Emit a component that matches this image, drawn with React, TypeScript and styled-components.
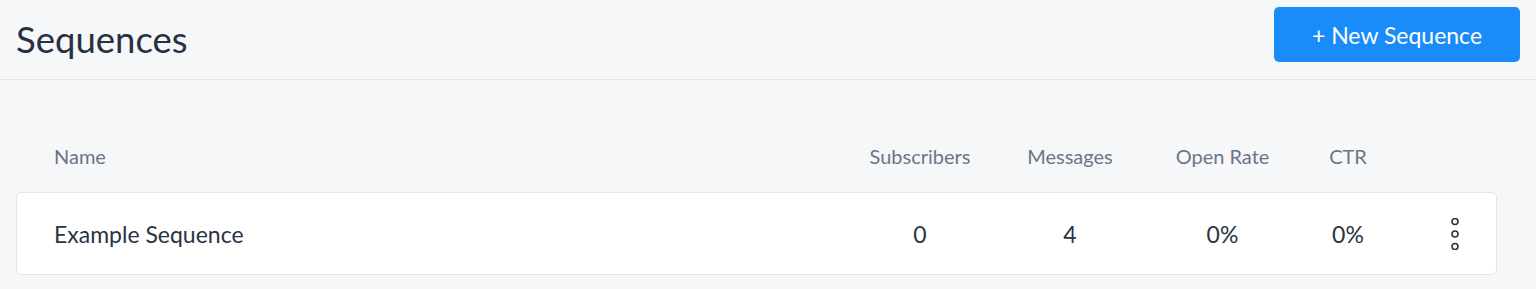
import React from 'react';
import styled, { createGlobalStyle } from 'styled-components';

const GlobalStyle = createGlobalStyle`
  html, body {
    margin: 0;
    padding: 0;
    background: #f6f7f9;
    font-family: Lato, "Noto Sans", "Liberation Sans", sans-serif;
  }
  * {
    box-sizing: border-box;
  }
`;

const Page = styled.div`
  width: 100%;
  min-height: 289px;
  background: #f6f7f9;
`;

const TopBar = styled.header`
  height: 80px;
  padding: 7px 16px 0 16px;

  display: flex;
  justify-content: space-between;
  align-items: flex-start;

  border-bottom: 1px solid #e2e5e9;
`;

const Title = styled.h1`
  margin: 0;
  padding-top: 10px;

  color: #283142;
  font-size: 36.5px;
  font-weight: 400;
  line-height: 44px;
`;

const PrimaryButton = styled.button`
  width: 246px;
  height: 55px;

  display: flex;
  align-items: center;
  justify-content: center;

  color: #fff;
  font-family: inherit;
  font-size: 23px;
  font-weight: 400;

  border: none;
  border-radius: 5px;
  background: #1a8cfa;
  cursor: pointer;
`;

const Content = styled.main`
  padding: 60px 39px 0 16px;
`;

const columns = '1fr 150px 150px 155px 96px 100px';

const HeaderRow = styled.div`
  height: 32px;
  padding: 0 1px 0 38px;
  margin-bottom: 20px;

  display: grid;
  grid-template-columns: ${columns};
  align-items: center;

  color: #6b7587;
  font-size: 20px;
`;

const HeaderCell = styled.div<{ $align?: 'left' | 'center' }>`
  text-align: ${p => p.$align || 'center'};
`;

const Card = styled.div`
  height: 83px;
  padding-left: 37px;

  display: grid;
  grid-template-columns: ${columns};
  align-items: center;

  color: #2a3344;
  font-size: 23px;

  border: 1px solid #e3e6ea;
  border-radius: 5px;
  background: #fff;
`;

const Cell = styled.div<{ $align?: 'left' | 'center' }>`
  text-align: ${p => p.$align || 'center'};
`;

const Actions = styled.div`
  display: flex;
  justify-content: flex-end;
  padding-right: 35px;
`;

const KebabButton = styled.button`
  width: 12px;
  height: 34px;
  padding: 0;

  display: flex;
  align-items: center;
  justify-content: center;

  border: none;
  background: transparent;
  cursor: pointer;
`;

interface Sequence {
  name: string;
  subscribers: number;
  messages: number;
  openRate: string;
  ctr: string;
}

const sequences: Sequence[] = [
  { name: 'Example Sequence', subscribers: 0, messages: 4, openRate: '0%', ctr: '0%' },
];

function KebabIcon() {
  return (
    <svg width="10" height="32" viewBox="0 0 10 32" fill="none" stroke="#2a3344" strokeWidth="1.6">
      <circle cx="5" cy="3.5" r="3" />
      <circle cx="5" cy="16" r="3" />
      <circle cx="5" cy="28.5" r="3" />
    </svg>
  );
}

export default function App() {
  return (
    <>
      <GlobalStyle />
      <Page>
        <TopBar>
          <Title>Sequences</Title>
          <PrimaryButton>+ New Sequence</PrimaryButton>
        </TopBar>
        <Content>
          <HeaderRow>
            <HeaderCell $align="left">Name</HeaderCell>
            <HeaderCell>Subscribers</HeaderCell>
            <HeaderCell>Messages</HeaderCell>
            <HeaderCell>Open Rate</HeaderCell>
            <HeaderCell>CTR</HeaderCell>
            <HeaderCell />
          </HeaderRow>
          {sequences.map((s, idx) => (
            <Card key={idx}>
              <Cell $align="left">{s.name}</Cell>
              <Cell>{s.subscribers}</Cell>
              <Cell>{s.messages}</Cell>
              <Cell>{s.openRate}</Cell>
              <Cell>{s.ctr}</Cell>
              <Actions>
                <KebabButton aria-label="More">
                  <KebabIcon />
                </KebabButton>
              </Actions>
            </Card>
          ))}
        </Content>
      </Page>
    </>
  );
}
